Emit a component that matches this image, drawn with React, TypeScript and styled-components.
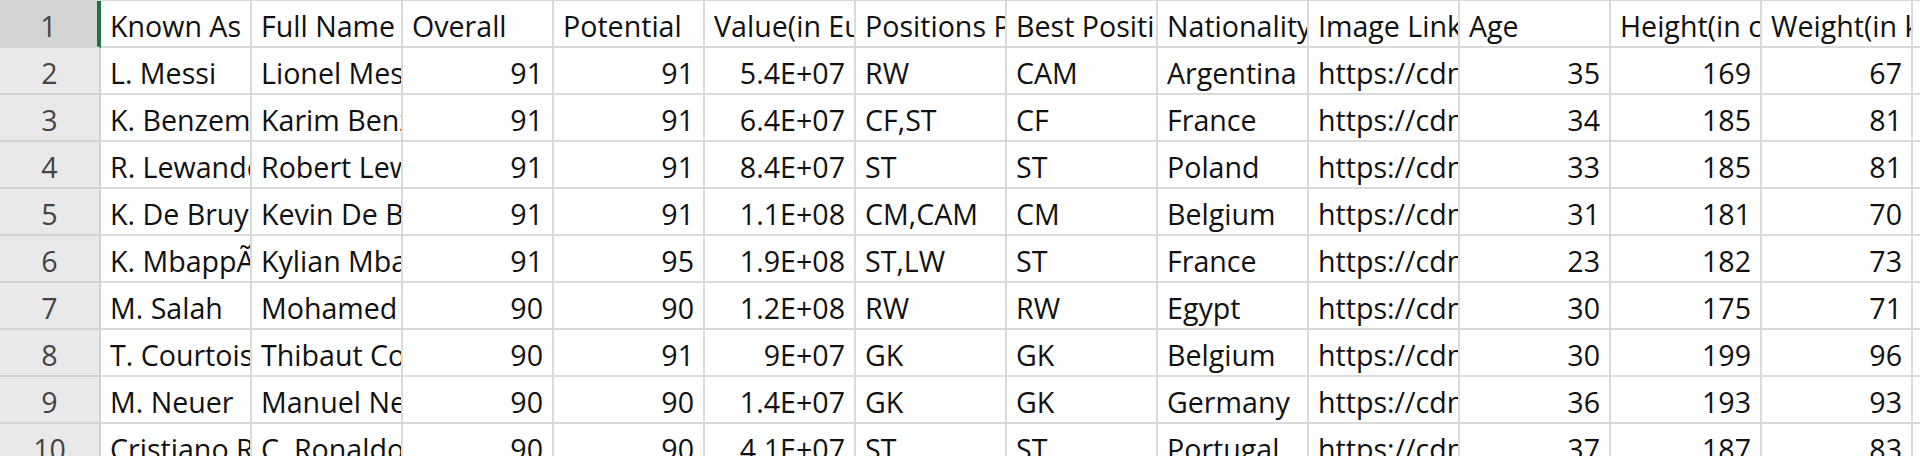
import React from "react";
import styled, { createGlobalStyle } from "styled-components";

const GlobalStyle = createGlobalStyle`
  html, body {
    margin: 0;
    padding: 0;
    background: #ffffff;
    overflow: hidden;
  }
`;

const Sheet = styled.div`
  display: grid;
  grid-template-columns: 101px repeat(12, 151px) 1fr;
  grid-auto-rows: 47px;
  width: 1920px;
  border-top: 1px solid #d6d6d6;
  font-family: "Open Sans", "Liberation Sans", sans-serif;
  font-size: 28.6px;
  line-height: 28px;
  color: #111111;
`;

const RowHead = styled.div<{ $active?: boolean }>`
  box-sizing: border-box;
  display: flex;
  align-items: flex-end;
  justify-content: center;
  padding-bottom: 6px;
  background: ${(p) => (p.$active ? "#d3d3d3" : "#e9e9e9")};
  border-bottom: 2px solid #d2d2d2;
  border-right: ${(p) => (p.$active ? "4px solid #217346" : "2px solid #d2d2d2")};
  color: #444444;
`;

const Cell = styled.div<{ $num?: boolean }>`
  box-sizing: border-box;
  display: flex;
  align-items: flex-end;
  justify-content: ${(p) => (p.$num ? "flex-end" : "flex-start")};
  padding: 0 ${(p) => (p.$num ? "9px" : "0")} 6px 9px;
  border-right: 2px solid #dadada;
  border-bottom: 2px solid #dadada;
  white-space: nowrap;
  overflow: hidden;
  text-overflow: clip;
`;

const header = [
  "Known As",
  "Full Name",
  "Overall",
  "Potential",
  "Value(in Euro)",
  "Positions Played",
  "Best Position",
  "Nationality",
  "Image Link",
  "Age",
  "Height(in cm)",
  "Weight(in kg)",
  "",
];

const players: (string | number)[][] = [
  ["L. Messi", "Lionel Messi", 91, 91, "5.4E+07", "RW", "CAM", "Argentina", "https://cdn.sofifa.net", 35, 169, 67, ""],
  ["K. Benzema", "Karim Benzema", 91, 91, "6.4E+07", "CF,ST", "CF", "France", "https://cdn.sofifa.net", 34, 185, 81, ""],
  ["R. Lewandowski", "Robert Lewandowski", 91, 91, "8.4E+07", "ST", "ST", "Poland", "https://cdn.sofifa.net", 33, 185, 81, ""],
  ["K. De Bruyne", "Kevin De Bruyne", 91, 91, "1.1E+08", "CM,CAM", "CM", "Belgium", "https://cdn.sofifa.net", 31, 181, 70, ""],
  ["K. MbappÃ©", "Kylian MbappÃ©", 91, 95, "1.9E+08", "ST,LW", "ST", "France", "https://cdn.sofifa.net", 23, 182, 73, ""],
  ["M. Salah", "Mohamed Salah", 90, 90, "1.2E+08", "RW", "RW", "Egypt", "https://cdn.sofifa.net", 30, 175, 71, ""],
  ["T. Courtois", "Thibaut Courtois", 90, 91, "9E+07", "GK", "GK", "Belgium", "https://cdn.sofifa.net", 30, 199, 96, ""],
  ["M. Neuer", "Manuel Neuer", 90, 90, "1.4E+07", "GK", "GK", "Germany", "https://cdn.sofifa.net", 36, 193, 93, ""],
  ["Cristiano Ronaldo", "C. Ronaldo dos Santos Aveiro", 90, 90, "4.1E+07", "ST", "ST", "Portugal", "https://cdn.sofifa.net", 37, 187, 83, ""],
];

const isNum = (v: string | number) => typeof v === "number" || /E\+/.test(String(v));

const App = () => {
  return (
    <>
      <GlobalStyle />
      <Sheet>
        <RowHead $active>1</RowHead>
        {header.map((h, j) => (
          <Cell key={j}>{h}</Cell>
        ))}
        {players.map((row, i) => (
          <React.Fragment key={i}>
            <RowHead>{i + 2}</RowHead>
            {row.map((v, j) => (
              <Cell key={j} $num={isNum(v)}>
                {v}
              </Cell>
            ))}
          </React.Fragment>
        ))}
      </Sheet>
    </>
  );
};

export default App;
